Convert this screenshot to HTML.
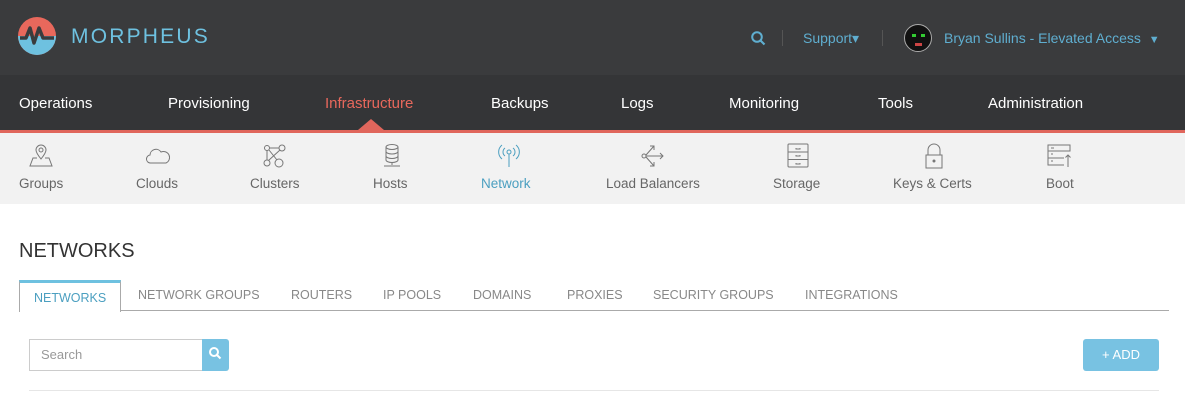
<!DOCTYPE html>
<html><head><meta charset="utf-8"><style>
*{margin:0;padding:0;box-sizing:border-box}
body{width:1185px;height:409px;overflow:hidden;background:#fff;font-family:"Liberation Sans",sans-serif;position:relative}
.top{position:absolute;left:0;top:0;width:1185px;height:75px;background:#3a3b3d}
.nav{position:absolute;left:0;top:75px;width:1185px;height:55px;background:#343537}
.redline{position:absolute;left:0;top:130px;width:1185px;height:3px;background:#e0665c}
.sub{position:absolute;left:0;top:133px;width:1185px;height:71px;background:#f2f2f2}
.t{position:absolute;white-space:nowrap}
.nav .t{top:20px;font-size:15px;color:#fff}
.sub .t{top:43px;font-size:13.5px;color:#666}
.sub svg{position:absolute;top:10px}
.tabs .t{font-size:12.5px;color:#888;top:288px}
</style></head><body>
<div class="top">
<svg style="position:absolute;left:18px;top:17px" width="38" height="38" viewBox="0 0 38 38">
<circle cx="19" cy="19" r="19" fill="#e8685c"/>
<path d="M0 19 A19 19 0 0 0 38 19 Z" fill="#6ec1e0"/>
<path d="M2 21 L8 21 L12 11 L16 26 L21 11 L25 21 L36 21" fill="none" stroke="#3a3b3d" stroke-width="3.5" stroke-linejoin="round"/>
</svg>
<div class="t" style="left:71px;top:25px;font-size:21px;letter-spacing:2.2px;color:#6ec1e0">MORPHEUS</div>
<svg style="position:absolute;left:751px;top:31px" width="15" height="15" viewBox="0 0 15 15"><circle cx="6" cy="6" r="4.8" fill="none" stroke="#5faed0" stroke-width="2"/><path d="M9.5 9.5 L13.5 13.5" stroke="#5faed0" stroke-width="2.2"/></svg>
<div style="position:absolute;left:782px;top:30px;width:1px;height:16px;background:#555"></div>
<div class="t" style="left:803px;top:30px;font-size:14px;color:#5faed0">Support▾</div>
<div style="position:absolute;left:882px;top:30px;width:1px;height:16px;background:#555"></div>
<div style="position:absolute;left:904px;top:24px;width:28px;height:28px;border-radius:50%;background:#111;border:1px solid #aaa"><div style="position:absolute;left:7px;top:9px;width:4px;height:3px;background:#3c3"></div><div style="position:absolute;left:16px;top:9px;width:4px;height:3px;background:#3c3"></div><div style="position:absolute;left:10px;top:18px;width:7px;height:3px;background:#c44"></div></div>
<div class="t" style="left:944px;top:30px;font-size:14px;color:#5faed0">Bryan Sullins - Elevated Access <span style="font-size:11px;margin-left:4px">▼</span></div>
</div>
<div class="nav">
<div class="t" style="left:19px">Operations</div>
<div class="t" style="left:168px">Provisioning</div>
<div class="t" style="left:325px;color:#e8685c">Infrastructure</div>
<div class="t" style="left:491px">Backups</div>
<div class="t" style="left:621px">Logs</div>
<div class="t" style="left:729px">Monitoring</div>
<div class="t" style="left:878px">Tools</div>
<div class="t" style="left:988px">Administration</div>
<div style="position:absolute;left:358px;top:44px;width:0;height:0;border-left:13px solid transparent;border-right:13px solid transparent;border-bottom:11px solid #e0665c"></div>
</div>
<div class="redline"></div>
<div class="sub">
<svg style="left:28px" width="26" height="26" viewBox="0 0 26 26" fill="none" stroke="#777" stroke-width="1"><path d="M13 16 C9 11 8 9 8 7 A5 5 0 0 1 18 7 C18 9 17 11 13 16Z"/><circle cx="13" cy="7" r="2"/><path d="M9 15 L5 15 L2 23 L24 23 L21 15 L17 15"/></svg>
<div class="t" style="left:19px">Groups</div>
<svg style="left:145px" width="26" height="26" viewBox="0 0 26 26" fill="none" stroke="#777"><path d="M6 20 A4 4 0 0 1 5 12 A6 6 0 0 1 16 9 A5 5 0 0 1 21 20 Z"/></svg>
<div class="t" style="left:136px">Clouds</div>
<svg style="left:262px" width="26" height="26" viewBox="0 0 26 26" fill="none" stroke="#777"><circle cx="5" cy="5" r="2.5"/><circle cx="20" cy="5" r="3"/><circle cx="5" cy="20" r="3"/><circle cx="17" cy="20" r="4"/><path d="M7.5 5 H17 M5 7.5 V17 M7 7 L15 17 M6.5 17.5 L18 7"/></svg>
<div class="t" style="left:250px">Clusters</div>
<svg style="left:379px" width="26" height="26" viewBox="0 0 26 26" fill="none" stroke="#777"><ellipse cx="13" cy="4" rx="6" ry="2.5"/><path d="M7 4 V17 A6 2.5 0 0 0 19 17 V4 M7 8.5 A6 2.5 0 0 0 19 8.5 M7 13 A6 2.5 0 0 0 19 13 M13 19.5 V22 M5 23 H21" /></svg>
<div class="t" style="left:373px">Hosts</div>
<svg style="left:496px" width="26" height="26" viewBox="0 0 26 26" fill="none" stroke="#4b9fc0"><circle cx="13" cy="9" r="2"/><path d="M13 11 V24 M9 5 A5 5 0 0 0 9 13 M17 5 A5 5 0 0 1 17 13 M6 2 A9 9 0 0 0 6 16 M20 2 A9 9 0 0 1 20 16"/></svg>
<div class="t" style="left:481px;color:#4b9fc0">Network</div>
<svg style="left:640px" width="26" height="26" viewBox="0 0 26 26" fill="none" stroke="#777"><circle cx="4" cy="13" r="2"/><path d="M6 12 L14 3 M6 13 H23 M6 14 L14 23 M10 3 H14 V7 M20 10 L23 13 L20 16 M10 23 H14 V19"/></svg>
<div class="t" style="left:606px">Load Balancers</div>
<svg style="left:785px" width="26" height="26" viewBox="0 0 26 26" fill="none" stroke="#777"><rect x="3" y="1" width="20" height="23" rx="1"/><path d="M3 9 H23 M3 16.5 H23 M11 5 V6 H15 V5 M11 12 V13 H15 V12 M11 20 V21 H15 V20"/></svg>
<div class="t" style="left:773px">Storage</div>
<svg style="left:921px" width="26" height="26" viewBox="0 0 26 26" fill="none" stroke="#777"><path d="M7 12 V7 A6 6 0 0 1 19 7 V12"/><rect x="5" y="12" width="16" height="13"/><circle cx="13" cy="18" r="1" fill="#777"/></svg>
<div class="t" style="left:893px">Keys &amp; Certs</div>
<svg style="left:1047px" width="26" height="26" viewBox="0 0 26 26" fill="none" stroke="#777"><rect x="1" y="2" width="22" height="6"/><path d="M1 8 V22 H17 M1 15 H17 M4 5 H7 M4 11 H6 M4 18 H6 M21 12 V24 M18.5 14.5 L21 12 L23.5 14.5"/></svg>
<div class="t" style="left:1046px">Boot</div>
</div>
<div class="t" style="left:19px;top:240px;font-size:20px;color:#333">NETWORKS</div>
<div style="position:absolute;left:19px;top:310px;width:1150px;height:1px;background:#aaa"></div>
<div style="position:absolute;left:19px;top:280px;width:102px;height:32px;background:#fff;border:1px solid #aaa;border-top:3px solid #6ec1e0;border-bottom:none"></div>
<div class="tabs">
<div class="t" style="left:34px;top:291px;color:#4b9fc0">NETWORKS</div>
<div class="t" style="left:138px">NETWORK GROUPS</div>
<div class="t" style="left:291px">ROUTERS</div>
<div class="t" style="left:383px">IP POOLS</div>
<div class="t" style="left:473px">DOMAINS</div>
<div class="t" style="left:567px">PROXIES</div>
<div class="t" style="left:653px">SECURITY GROUPS</div>
<div class="t" style="left:805px">INTEGRATIONS</div>
</div>
<div style="position:absolute;left:29px;top:339px;width:174px;height:32px;border:1px solid #ccc;border-right:none"></div>
<div class="t" style="left:41px;top:347px;font-size:13px;color:#999">Search</div>
<div style="position:absolute;left:202px;top:339px;width:27px;height:32px;background:#78c2e2;border-radius:0 3px 3px 0"></div>
<svg style="position:absolute;left:208px;top:346px" width="14" height="14" viewBox="0 0 14 14"><circle cx="6" cy="6" r="4" fill="none" stroke="#fff" stroke-width="2"/><path d="M9 9 L12.5 12.5" stroke="#fff" stroke-width="2"/></svg>
<div style="position:absolute;left:1083px;top:339px;width:76px;height:32px;background:#78c2e2;border-radius:3px;color:#fff;font-size:13px;text-align:center;line-height:32px">+ ADD</div>
<div style="position:absolute;left:29px;top:390px;width:1130px;height:1px;background:#e6e6e6"></div>
</body></html>
